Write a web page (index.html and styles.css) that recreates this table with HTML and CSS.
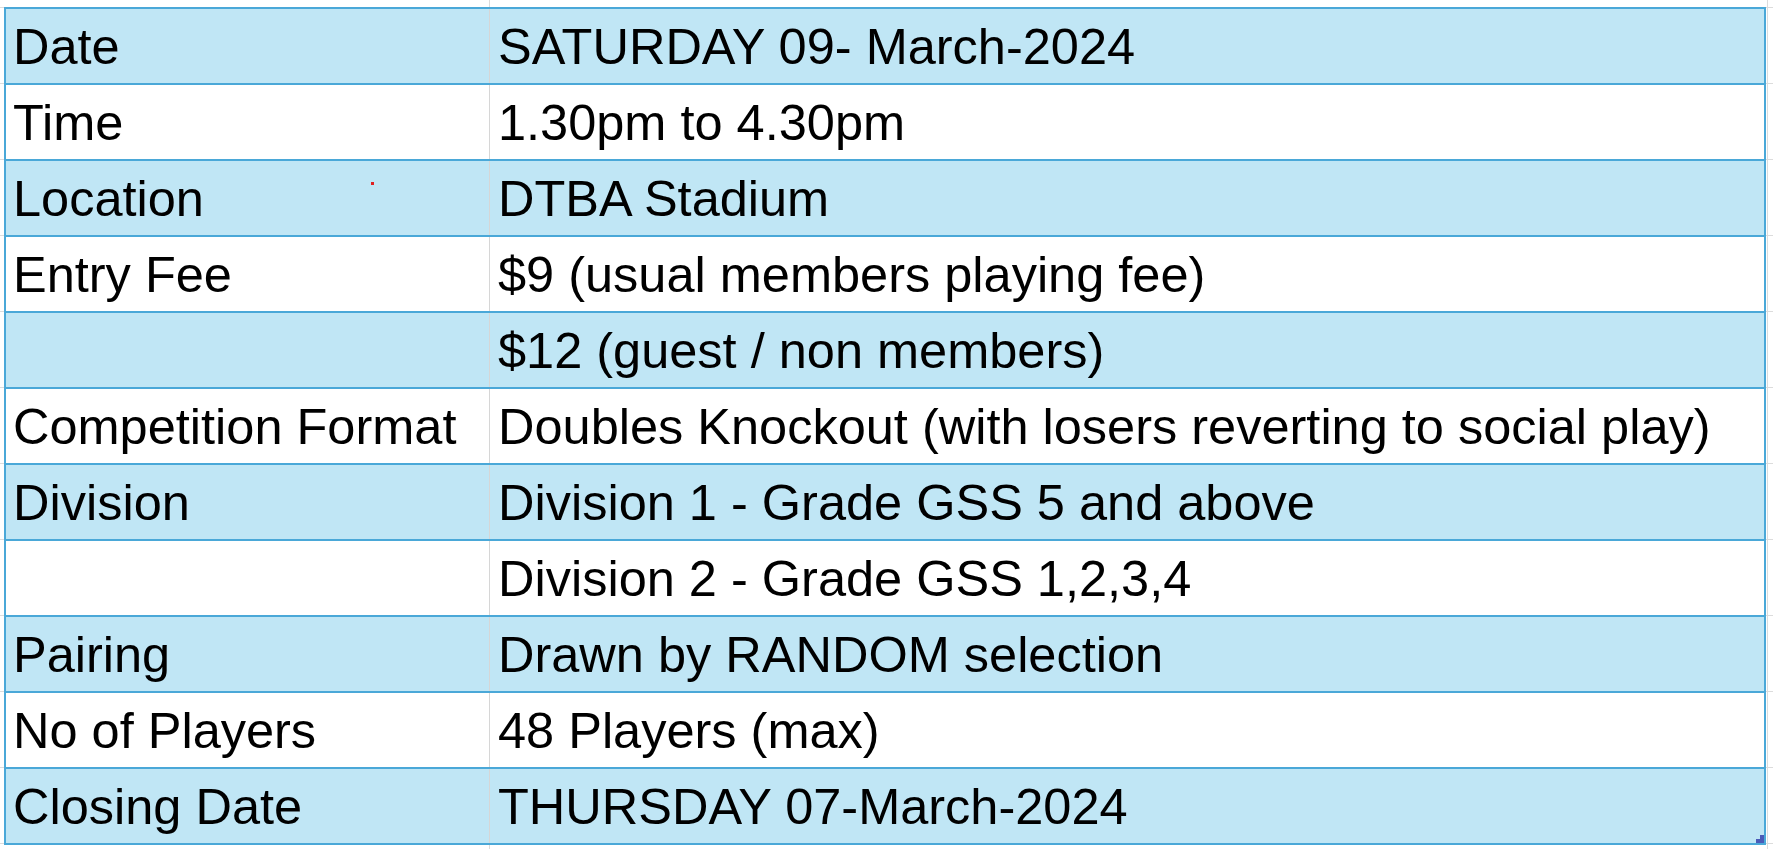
FILE: index.html
```html
<!DOCTYPE html>
<html lang="en">
<head>
<meta charset="utf-8">
<title>Competition Details</title>
<link rel="stylesheet" href="styles.css">
</head>
<body>
<div class="sheet">
  <div class="row blue"><div class="label">Date</div><div class="value">SATURDAY 09- March-2024</div></div>
  <div class="row"><div class="label">Time</div><div class="value">1.30pm to 4.30pm</div></div>
  <div class="row blue"><div class="label">Location<span class="mark"></span></div><div class="value">DTBA Stadium</div></div>
  <div class="row"><div class="label">Entry Fee</div><div class="value">$9 (usual members playing fee)</div></div>
  <div class="row blue"><div class="label"></div><div class="value">$12 (guest / non members)</div></div>
  <div class="row"><div class="label">Competition Format</div><div class="value">Doubles Knockout (with losers reverting to social play)</div></div>
  <div class="row blue"><div class="label">Division</div><div class="value">Division 1 - Grade GSS 5 and above</div></div>
  <div class="row"><div class="label"></div><div class="value">Division 2 - Grade GSS 1,2,3,4</div></div>
  <div class="row blue"><div class="label">Pairing</div><div class="value">Drawn by RANDOM selection</div></div>
  <div class="row"><div class="label">No of Players</div><div class="value">48 Players (max)</div></div>
  <div class="row blue last"><div class="label">Closing Date</div><div class="value">THURSDAY 07-March-2024</div><span class="handle"></span></div>
</div>
</body>
</html>
```

FILE: styles.css
```css
html, body {
  margin: 0;
  padding: 0;
}

body {
  width: 1773px;
  height: 849px;
  overflow: hidden;
  background-color: #ffffff;
  background-image:
    linear-gradient(to right, #dcdcdc 0 1px, transparent 1px),
    linear-gradient(to right, #dcdcdc 0 1px, transparent 1px),
    linear-gradient(to bottom, #dcdcdc 0 1px, transparent 1px);
  background-size: 1px 100%, 1px 100%, 100% 76px;
  background-position: 489px 0, 1767px 0, 0 7px;
  background-repeat: no-repeat, no-repeat, repeat-y;
  font-family: "Liberation Sans", Arial, sans-serif;
  color: #000000;
}

.sheet {
  margin: 7px 0 0 4px;
  width: 1762px;
  box-sizing: border-box;
  border-top: 2px solid #4aa8d8;
  border-left: 2px solid #4aa8d8;
  border-right: 2px solid #4aa8d8;
}

.row {
  position: relative;
  display: grid;
  grid-template-columns: 483px 1fr;
  height: 76px;
  box-sizing: border-box;
  border-bottom: 2px solid #4aa8d8;
  background: #ffffff;
}

.row.blue {
  background: #c0e6f5;
}

.label,
.value {
  position: relative;
  font-size: 50.5px;
  line-height: 58px;
  padding: 9px 0 0 7px;
  white-space: nowrap;
}

.value {
  border-left: 1px solid #d6d6d6;
  padding-left: 8px;
}

.mark {
  position: absolute;
  left: 365px;
  top: 21px;
  width: 3px;
  height: 3px;
  background: #e02020;
}

.handle {
  position: absolute;
  right: 0;
  bottom: 0;
  width: 8px;
  height: 8px;
  background: linear-gradient(to bottom, transparent 0 4px, #4a5bb8 4px),
              linear-gradient(to right, transparent 0 4px, #4a5bb8 4px);
  background-size: 100% 100%, 100% 4px;
  background-repeat: no-repeat;
}
```
